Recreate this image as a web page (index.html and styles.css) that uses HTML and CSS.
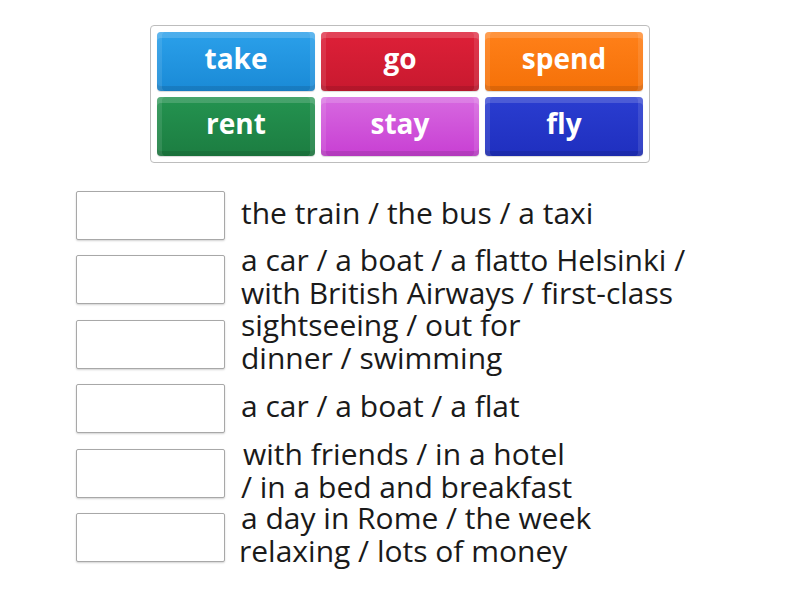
FILE: index.html
```html
<!DOCTYPE html>
<html>
<head>
<meta charset="utf-8">
<link rel="stylesheet" href="styles.css">
</head>
<body>
<div class="bank">
  <div class="tile blue">take</div>
  <div class="tile red">go</div>
  <div class="tile orange">spend</div>
  <div class="tile green">rent</div>
  <div class="tile pink">stay</div>
  <div class="tile navy">fly</div>
</div>
<div class="rows">
  <div class="row"><div class="slot"></div><div class="text">the train / the bus / a taxi</div></div>
  <div class="row"><div class="slot"></div><div class="text">a car / a boat / a flatto Helsinki /<br>with British Airways / first-class</div></div>
  <div class="row"><div class="slot"></div><div class="text">sightseeing / out for<br>dinner / swimming</div></div>
  <div class="row"><div class="slot"></div><div class="text">a car / a boat / a flat</div></div>
  <div class="row"><div class="slot"></div><div class="text"><span class="ind">with friends / in a hotel</span><br>/ in a bed and breakfast</div></div>
  <div class="row"><div class="slot"></div><div class="text">a day in Rome / the week<br><span class="out">relaxing / lots of money</span></div></div>
</div>
</body>
</html>
```
FILE: styles.css
```css
html, body {
  margin: 0;
  padding: 0;
  background: #fff;
  font-family: "Open Sans", "Liberation Sans", sans-serif;
}
body {
  min-height: 600px;
}
.bank {
  box-sizing: border-box;
  width: 500px;
  height: 138px;
  margin: 25px 0 0 150px;
  padding: 6px;
  border: 1px solid #bdbdbd;
  border-radius: 4px;
  display: grid;
  grid-template-columns: 158px 158px 158px;
  grid-template-rows: 59px 59px;
  gap: 6px 6px;
}
.tile {
  border-radius: 4px;
  color: #fff;
  font-weight: 700;
  font-size: 28px;
  display: flex;
  align-items: center;
  justify-content: center;
  padding-bottom: 8px;
  box-sizing: border-box;
  box-shadow:
    inset 5px 0 0 rgba(255,255,255,0.10),
    inset -5px 0 0 rgba(255,255,255,0.10),
    inset 0 6px 0 rgba(255,255,255,0.16),
    inset 0 -5px 0 rgba(0,0,0,0.10),
    0 1px 1px rgba(0,0,0,0.15);
}
.blue { background: linear-gradient(#2ba0ea, #1a8ad6); }
.red { background: linear-gradient(#de2038, #c8192f); }
.orange { background: linear-gradient(#ff8019, #f57108); }
.green { background: linear-gradient(#249350, #1c7d41); }
.pink { background: linear-gradient(#d769e0, #c83fd3); }
.navy { background: linear-gradient(#2a3dd0, #1f2fbf); }
.rows {
  margin: 28px 0 0 76px;
  display: flex;
  flex-direction: column;
  gap: 15.4px;
}
.row {
  display: flex;
  align-items: center;
  height: 49px;
}
.slot {
  box-sizing: border-box;
  width: 149px;
  height: 49px;
  flex: none;
  border: 1px solid #a8a8a8;
  border-radius: 2px;
  box-shadow: 0 1px 2px rgba(0,0,0,0.18);
  background: #fff;
}
.text {
  margin-left: 16px;
  margin-top: -7px;
  font-size: 30px;
  line-height: 33px;
  color: #1a1a1a;
  white-space: nowrap;
}
.ind { margin-left: 2px; }
.out { margin-left: -2px; }
```
